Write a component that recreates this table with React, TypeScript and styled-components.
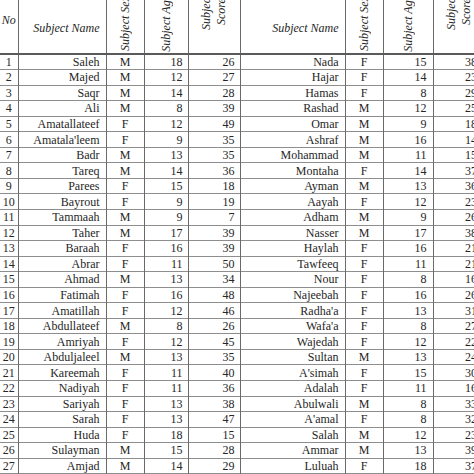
import React from 'react';
import styled, { createGlobalStyle } from 'styled-components';

type Subject = { name: string; sex: 'M' | 'F'; age: number; score: number };

const LEFT: Subject[] = [
  { name: 'Saleh', sex: 'M', age: 18, score: 26 },
  { name: 'Majed', sex: 'M', age: 12, score: 27 },
  { name: 'Saqr', sex: 'M', age: 14, score: 28 },
  { name: 'Ali', sex: 'M', age: 8, score: 39 },
  { name: 'Amatallateef', sex: 'F', age: 12, score: 49 },
  { name: "Amatala'leem", sex: 'F', age: 9, score: 35 },
  { name: 'Badr', sex: 'M', age: 13, score: 35 },
  { name: 'Tareq', sex: 'M', age: 14, score: 36 },
  { name: 'Parees', sex: 'F', age: 15, score: 18 },
  { name: 'Bayrout', sex: 'F', age: 9, score: 19 },
  { name: 'Tammaah', sex: 'M', age: 9, score: 7 },
  { name: 'Taher', sex: 'M', age: 17, score: 39 },
  { name: 'Baraah', sex: 'F', age: 16, score: 39 },
  { name: 'Abrar', sex: 'F', age: 11, score: 50 },
  { name: 'Ahmad', sex: 'M', age: 13, score: 34 },
  { name: 'Fatimah', sex: 'F', age: 16, score: 48 },
  { name: 'Amatillah', sex: 'F', age: 12, score: 46 },
  { name: 'Abdullateef', sex: 'M', age: 8, score: 26 },
  { name: 'Amriyah', sex: 'F', age: 12, score: 45 },
  { name: 'Abduljaleel', sex: 'M', age: 13, score: 35 },
  { name: 'Kareemah', sex: 'F', age: 11, score: 40 },
  { name: 'Nadiyah', sex: 'F', age: 11, score: 36 },
  { name: 'Sariyah', sex: 'F', age: 13, score: 38 },
  { name: 'Sarah', sex: 'F', age: 13, score: 47 },
  { name: 'Huda', sex: 'F', age: 18, score: 15 },
  { name: 'Sulayman', sex: 'M', age: 15, score: 28 },
  { name: 'Amjad', sex: 'M', age: 14, score: 29 },
];

const RIGHT: Subject[] = [
  { name: 'Nada', sex: 'F', age: 15, score: 38 },
  { name: 'Hajar', sex: 'F', age: 14, score: 23 },
  { name: 'Hamas', sex: 'F', age: 8, score: 29 },
  { name: 'Rashad', sex: 'M', age: 12, score: 25 },
  { name: 'Omar', sex: 'M', age: 9, score: 18 },
  { name: 'Ashraf', sex: 'M', age: 16, score: 14 },
  { name: 'Mohammad', sex: 'M', age: 11, score: 15 },
  { name: 'Montaha', sex: 'F', age: 14, score: 37 },
  { name: 'Ayman', sex: 'M', age: 13, score: 36 },
  { name: 'Aayah', sex: 'F', age: 12, score: 23 },
  { name: 'Adham', sex: 'M', age: 9, score: 26 },
  { name: 'Nasser', sex: 'M', age: 17, score: 38 },
  { name: 'Haylah', sex: 'F', age: 16, score: 21 },
  { name: 'Tawfeeq', sex: 'F', age: 11, score: 21 },
  { name: 'Nour', sex: 'F', age: 8, score: 16 },
  { name: 'Najeebah', sex: 'F', age: 16, score: 26 },
  { name: "Radha'a", sex: 'F', age: 13, score: 31 },
  { name: "Wafa'a", sex: 'F', age: 8, score: 27 },
  { name: 'Wajedah', sex: 'F', age: 12, score: 22 },
  { name: 'Sultan', sex: 'M', age: 13, score: 24 },
  { name: "A'simah", sex: 'F', age: 15, score: 30 },
  { name: 'Adalah', sex: 'F', age: 11, score: 16 },
  { name: 'Abulwali', sex: 'M', age: 8, score: 33 },
  { name: "A'amal", sex: 'F', age: 8, score: 32 },
  { name: 'Salah', sex: 'M', age: 12, score: 23 },
  { name: 'Ammar', sex: 'M', age: 13, score: 39 },
  { name: 'Luluah', sex: 'F', age: 18, score: 37 },
];

// widths of the visible columns, left to right
const COLS = [18, 88, 38, 44, 52, 105, 38, 50, 52];

const GlobalStyle = createGlobalStyle`
  html, body {
    margin: 0;
    padding: 0;
    background: #fff;
    overflow: hidden;
  }
`;

const Sheet = styled.div`
  width: 474px;
  height: 474px;
  overflow: hidden;
  background: #fff;
`;

const Grid = styled.table`
  border-collapse: collapse;
  table-layout: fixed;
  width: ${COLS.reduce((a, b) => a + b, 0)}px;
  font-family: 'Liberation Serif', 'Times New Roman', serif;
  font-size: 12px;
  color: #262626;
`;

const HeadRow = styled.tr`
  height: 54px;
  border-bottom: 2px solid #5a5a5a;
`;

const HeadCell = styled.th<{ $align?: 'left' | 'center' | 'right' }>`
  padding: 0;
  border-left: 1px solid #6a6a6a;
  font-weight: normal;
  font-style: italic;
  font-size: 12px;
  vertical-align: top;
  text-align: ${(p) => p.$align ?? 'center'};

  &:first-child {
    border-left: none;
  }
`;

const HeadLabel = styled.div<{ $top: number; $pad?: number }>`
  padding-top: ${(p) => p.$top}px;
  padding-right: ${(p) => p.$pad ?? 0}px;
  white-space: nowrap;
`;

const RotBox = styled.div<{ $bottom: number }>`
  height: 53px;
  box-sizing: border-box;
  overflow: hidden;
  display: flex;
  flex-direction: column;
  justify-content: flex-end;
  align-items: center;
  padding-bottom: ${(p) => p.$bottom}px;
`;

const RotText = styled.span<{ $wrap?: boolean }>`
  display: inline-block;
  writing-mode: vertical-rl;
  transform: rotate(180deg);
  white-space: ${(p) => (p.$wrap ? 'normal' : 'nowrap')};
  max-height: ${(p) => (p.$wrap ? '40px' : 'none')};
  line-height: 15px;
  text-align: center;
  flex-shrink: 0;
`;

const Row = styled.tr`
  height: 15.55px;
  border-bottom: 1px solid #8e8e8e;
`;

const Cell = styled.td<{ $align: 'center' | 'right'; $pad?: number }>`
  padding: 0 ${(p) => p.$pad ?? 5}px 0 0;
  border-left: 1px solid #6a6a6a;
  text-align: ${(p) => p.$align};
  line-height: 14px;
  white-space: nowrap;
  overflow: hidden;

  &:first-child {
    border-left: none;
    padding: 0;
  }
`;

function SubjectCells({ s, wide }: { s: Subject; wide?: boolean }) {
  return (
    <>
      <Cell $align="right" $pad={6}>{s.name}</Cell>
      <Cell $align="center" $pad={0}>{s.sex}</Cell>
      <Cell $align="right" $pad={wide ? 6 : 5}>{s.age}</Cell>
      <Cell $align="right" $pad={wide ? 8 : 5}>{s.score}</Cell>
    </>
  );
}

function SubjectHeads() {
  return (
    <>
      <HeadCell $align="right">
        <HeadLabel $top={21} $pad={6}>Subject Name</HeadLabel>
      </HeadCell>
      <HeadCell>
        <RotBox $bottom={2}>
          <RotText>Subject Sex</RotText>
        </RotBox>
      </HeadCell>
      <HeadCell>
        <RotBox $bottom={1}>
          <RotText>Subject Age</RotText>
        </RotBox>
      </HeadCell>
      <HeadCell>
        <RotBox $bottom={21}>
          <RotText $wrap>Subject Score</RotText>
        </RotBox>
      </HeadCell>
    </>
  );
}

export default function App() {
  return (
    <>
      <GlobalStyle />
      <Sheet>
        <Grid>
          <colgroup>
            {COLS.map((w, i) => (
              <col key={i} style={{ width: w }} />
            ))}
          </colgroup>
          <thead>
            <HeadRow>
              <HeadCell>
                <HeadLabel $top={13}>No</HeadLabel>
              </HeadCell>
              <SubjectHeads />
              <SubjectHeads />
            </HeadRow>
          </thead>
          <tbody>
            {LEFT.map((s, i) => (
              <Row key={i}>
                <Cell $align="center">{i + 1}</Cell>
                <SubjectCells s={s} />
                <SubjectCells s={RIGHT[i]} wide />
              </Row>
            ))}
          </tbody>
        </Grid>
      </Sheet>
    </>
  );
}
